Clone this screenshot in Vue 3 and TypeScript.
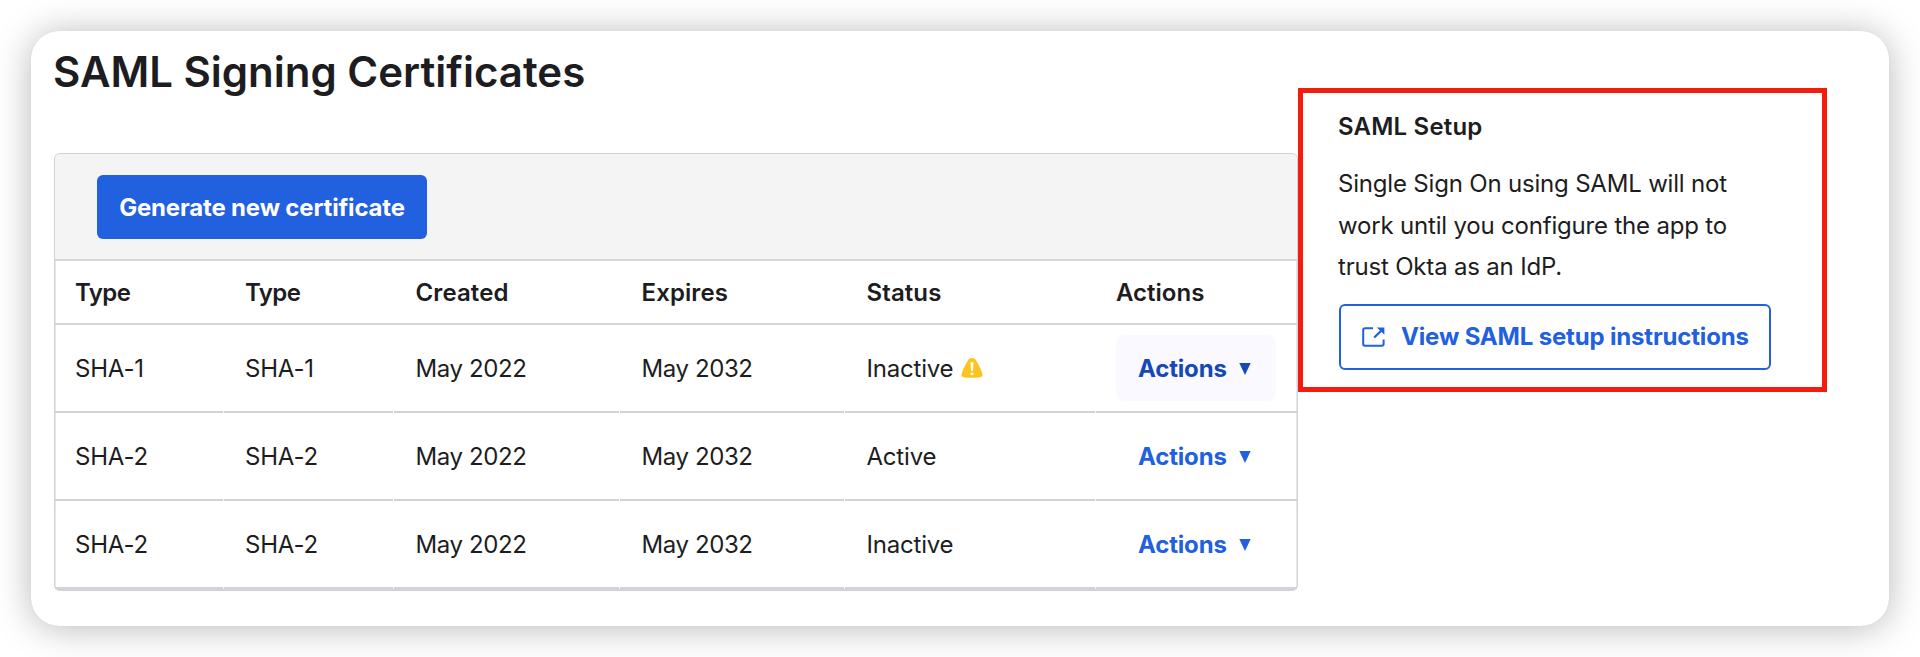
<script setup lang="ts">
interface Certificate {
  kind: string
  algorithm: string
  created: string
  expires: string
  status: string
  warning?: boolean
  hovered?: boolean
}

const columns: string[] = ['Type', 'Type', 'Created', 'Expires', 'Status', 'Actions']

const certificates: Certificate[] = [
  { kind: 'SHA-1', algorithm: 'SHA-1', created: 'May 2022', expires: 'May 2032', status: 'Inactive', warning: true, hovered: true },
  { kind: 'SHA-2', algorithm: 'SHA-2', created: 'May 2022', expires: 'May 2032', status: 'Active' },
  { kind: 'SHA-2', algorithm: 'SHA-2', created: 'May 2022', expires: 'May 2032', status: 'Inactive' },
]
</script>

<template>
  <div class="page">
    <main class="card">
      <section class="certificates">
        <h1>SAML Signing Certificates</h1>
        <div class="panel">
          <div class="toolbar">
            <button class="primary" type="button">Generate new certificate</button>
          </div>
          <div class="row head">
            <div v-for="(column, i) in columns" :key="i" class="cell">{{ column }}</div>
          </div>
          <div v-for="(cert, i) in certificates" :key="i" class="row entry">
            <div class="cell">{{ cert.kind }}</div>
            <div class="cell">{{ cert.algorithm }}</div>
            <div class="cell">{{ cert.created }}</div>
            <div class="cell">{{ cert.expires }}</div>
            <div class="cell">
              {{ cert.status }}
              <svg v-if="cert.warning" class="warning" viewBox="0 0 22 20" width="22" height="20" aria-label="Warning">
                <path d="M11 0C13 0 14.4 1 15.6 3.2C18.6 8.4 20.8 13 21.5 16.4C21.8 18.8 20.6 19.3 18 19.5Q11 20.1 4 19.5C1.4 19.3.2 18.8.5 16.4C1.2 13 3.4 8.4 6.4 3.2C7.6 1 9 0 11 0Z" fill="#fbc51d" />
                <path d="M9.5 4.3H12.5L12 13H10ZM9.6 14.7H12.4V17H9.6Z" fill="#fff" />
              </svg>
            </div>
            <div class="cell">
              <button class="menu" :class="{ hovered: cert.hovered }" type="button">
                Actions
                <svg class="caret" viewBox="0 0 12 12" width="12" height="12"><path d="M.3 0H11.7L6 12Z" fill="currentColor" /></svg>
              </button>
            </div>
          </div>
        </div>
      </section>

      <aside class="setup">
        <h2>SAML Setup</h2>
        <p>Single Sign On using SAML will not work until you configure the app to trust Okta as an IdP.</p>
        <button class="outline" type="button">
          <svg viewBox="0 0 23 20" width="23" height="20" fill="none" stroke="currentColor" stroke-width="2">
            <path d="M11 1.3H3Q1.2 1.3 1.2 3V17Q1.2 18.8 3 18.8H19.8Q21.6 18.8 21.6 17V12.5" />
            <path d="M12.2 10.5L20.5 2.5" stroke-width="2.3" />
            <path d="M14.8 .6H22.4V7.8Z" fill="currentColor" stroke="none" />
          </svg>
          View SAML setup instructions
        </button>
      </aside>
    </main>
  </div>
</template>

<style>
body {
  background: #fff;
}
</style>

<style scoped>
.page {
  box-sizing: border-box;
  width: 1920px;
  height: 657px;
  padding: 31px;
  overflow: hidden;
  color: #1d1d21;
  font: 400 24px/32px Inter, "Liberation Sans", sans-serif;
}
.card {
  display: flex;
  align-items: flex-start;
  box-sizing: border-box;
  width: 1858px;
  height: 595px;
  padding-left: 23px;
  border-radius: 28px;
  background: #fff;
  box-shadow: 0 0 1px rgba(0, 0, 0, 0.1), 0 2px 36px rgba(0, 0, 0, 0.28);
}
.certificates {
  width: 1244px;
  padding-top: 15px;
}
h1 {
  margin: 0 0 56px -1px;
  font-size: 42px;
  line-height: 51px;
  font-weight: 600;
  white-space: nowrap;
}
.panel {
  border: 1px solid #d2d2da;
  border-bottom-width: 2px;
  border-radius: 6px;
  box-shadow: inset 0 0 0 0.5px #d2d2da;
}
.toolbar {
  display: flex;
  align-items: center;
  box-sizing: border-box;
  height: 107px;
  padding: 0 0 0 42px;
  border-bottom: 2px solid #d6d6dd;
  border-radius: 5px 5px 0 0;
  background: #f4f4f4;
}
button {
  display: flex;
  align-items: center;
  box-sizing: border-box;
  margin: 0;
  border: 0;
  font: 650 24px/32px Inter, "Liberation Sans", sans-serif;
  letter-spacing: -0.17px;
  white-space: nowrap;
}
.primary {
  justify-content: center;
  width: 330px;
  height: 64px;
  padding: 2px 0 0;
  border-radius: 6px;
  background: #2160de;
  color: #fff;
}
.row {
  display: grid;
  box-sizing: border-box;
  grid-template-columns: 169px 170px 226px 225px 251px 1fr;
}
.cell {
  display: flex;
  align-items: center;
  box-sizing: border-box;
  padding-left: 21px;
  white-space: nowrap;
}
.cell:first-child {
  padding-left: 20px;
}
.cell:nth-child(3),
.cell:nth-child(4),
.cell:nth-child(5) {
  padding-left: 21.5px;
}
.cell:last-child {
  padding-left: 20px;
}
.head {
  height: 64px;
  padding-top: 1px;
  border-bottom: 2px solid #d6d6dd;
  font-weight: 600;
}
.head .cell:nth-child(n + 3) {
  letter-spacing: 0.1px;
}
.head .cell:last-child {
  letter-spacing: 0;
}
.head .cell:nth-child(-n + 2) {
  letter-spacing: -0.6px;
}
.entry {
  height: 88px;
  letter-spacing: -0.2px;
}
.entry .cell {
  padding-top: 2px;
  border-bottom: 2px solid #d2d2da;
}
.entry .cell:not(:last-child) {
  margin-right: 1px;
}
.entry .cell:last-child {
  padding-top: 0;
}
.entry .cell:nth-child(3),
.entry .cell:nth-child(4) {
  letter-spacing: -0.4px;
}
.warning {
  margin: -2px 0 0 8px;
}
.menu {
  width: 160px;
  height: 66px;
  padding: 1px 0 0 22px;
  border-radius: 8px;
  background: transparent;
  color: #2160de;
}
.menu.hovered {
  background: #f9f9ff;
  color: #1549b5;
}
.caret {
  margin: 0 0 0 12px;
}
.setup {
  box-sizing: border-box;
  width: 529px;
  height: 304px;
  margin: 57px 0 0;
  padding: 18px 40px 0 36px;
  border: 5px solid #f41c0c;
}
h2 {
  margin: 0 0 20px -1px;
  font-size: 24px;
  line-height: 32px;
  font-weight: 600;
  letter-spacing: 0.2px;
}
.setup p {
  width: 410px;
  margin: 0 0 16px -1px;
  line-height: 41.5px;
  letter-spacing: -0.19px;
}
.outline {
  width: 432px;
  height: 66px;
  padding: 1px 0 0 21px;
  border: 2px solid #2160de;
  border-radius: 6px;
  background: #fff;
  color: #2160de;
}
.outline svg {
  margin-right: 16px;
}
</style>
